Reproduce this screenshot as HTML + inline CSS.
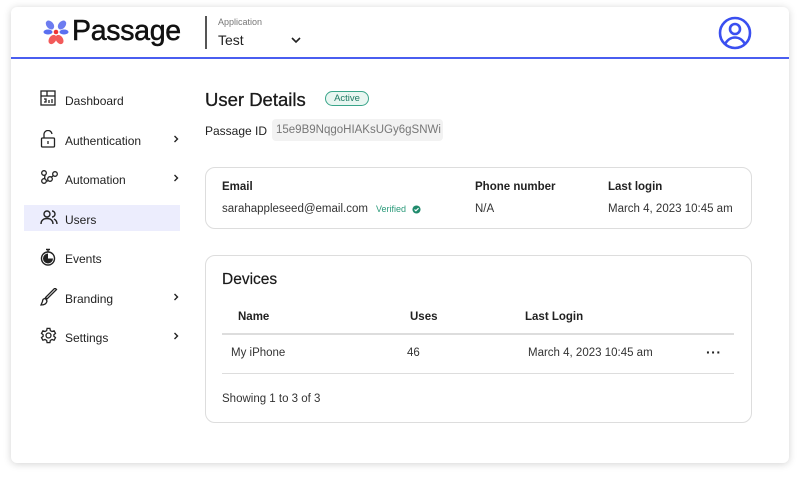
<!DOCTYPE html>
<html><head><meta charset="utf-8"><style>
*{box-sizing:border-box;margin:0;padding:0}
body{width:800px;height:478px;background:#fff;font-family:"Liberation Sans",sans-serif;color:#222;position:relative;overflow:hidden}
.card{position:absolute;left:11px;top:7px;width:778px;height:456px;background:#fff;border-radius:6px;box-shadow:0 1px 8px rgba(0,0,0,.18)}
.a{position:absolute;white-space:nowrap}
.nav{position:absolute;left:40px;font-size:12px;color:#222}
.nav svg{position:absolute;left:0;top:-3px}
.nav span{position:absolute;left:25px;top:1px}
.chev{position:absolute;left:172px;width:8px;height:8px}
.box{position:absolute;border:1.5px solid #ddd;border-radius:10px;background:#fff}
.b{font-weight:bold;font-size:11.5px}
.t{font-size:11.5px;color:#333}
</style></head><body>
<div class="card"></div>
<!-- logo -->
<svg class="a" style="left:43px;top:18px" width="26" height="28" viewBox="0 0 26 28">
<g fill="#6c7cf0"><ellipse cx="7" cy="7" rx="3.5" ry="5" transform="rotate(-40 7 7)"/><ellipse cx="19" cy="7" rx="3.5" ry="5" transform="rotate(40 19 7)"/><ellipse cx="5" cy="14" rx="4.5" ry="2.5" fill="#5a6ff0"/><ellipse cx="21" cy="14" rx="4.5" ry="2.5" fill="#5a6ff0"/></g>
<circle cx="13" cy="14" r="2.3" fill="#e33"/>
<ellipse cx="9.5" cy="21.5" rx="3.5" ry="5" transform="rotate(35 9.5 21.5)" fill="#f25a5a"/><ellipse cx="16.5" cy="21.5" rx="3.5" ry="5" transform="rotate(-35 16.5 21.5)" fill="#f25a5a"/>
</svg>
<div class="a" style="left:72px;top:15px;font-size:28.5px;color:#111;letter-spacing:-0.3px;-webkit-text-stroke:0.5px #111">Passage</div>
<div class="a" style="left:205px;top:16px;width:1.5px;height:33px;background:#555"></div>
<div class="a" style="left:218px;top:17px;font-size:9px;color:#777">Application</div>
<div class="a" style="left:218px;top:32px;font-size:14px;color:#222">Test</div>
<svg class="a" style="left:290px;top:36px" width="12" height="8" viewBox="0 0 12 8"><path d="M2 2l4 4 4-4" stroke="#222" stroke-width="1.6" fill="none"/></svg>
<svg class="a" style="left:718px;top:16px" width="34" height="34" viewBox="0 0 34 34"><g stroke="#3a4ff0" stroke-width="2.6" fill="none"><circle cx="17" cy="17" r="15"/><circle cx="17" cy="13" r="5"/><path d="M7 28c3-5 6-6.5 10-6.5s7 1.5 10 6.5"/></g></svg>
<div class="a" style="left:11px;top:57px;width:778px;height:1.5px;background:#4a5ef0"></div>
<!-- nav -->
<div class="a" style="left:24px;top:205px;width:156px;height:26px;background:#ecedfd"></div>
<div class="nav" style="top:93px"><svg width="16" height="16" viewBox="0 0 16 16"><g stroke="#222" stroke-width="1.3" fill="none"><rect x="1" y="1" width="14" height="14"/><path d="M1 6h14M7 1v5M4 9h2v3H4M9 10v3M12 9v4"/></g></svg><span>Dashboard</span></div>
<div class="nav" style="top:133px"><svg width="16" height="18" viewBox="0 0 16 18"><g stroke="#222" stroke-width="1.3" fill="none"><rect x="1.5" y="8" width="13" height="9" rx="1"/><path d="M4 8V5a4 4 0 0 1 8-1"/><path d="M8 11v3"/></g></svg><span>Authentication</span></div>
<svg class="chev" style="top:135px" viewBox="0 0 8 8"><path d="M2.5 1l3 3-3 3" stroke="#222" stroke-width="1.4" fill="none"/></svg>
<div class="nav" style="top:172px"><svg width="18" height="16" viewBox="0 0 18 16"><g stroke="#222" stroke-width="1.3" fill="none"><circle cx="4" cy="4" r="2.3"/><circle cx="4" cy="12" r="2.3"/><circle cx="10" cy="10" r="2.3"/><circle cx="15" cy="5" r="2.3"/><path d="M5 6l-.5 4M6 12h2M11.5 8l2-1.5"/></g></svg><span>Automation</span></div>
<svg class="chev" style="top:174px" viewBox="0 0 8 8"><path d="M2.5 1l3 3-3 3" stroke="#222" stroke-width="1.4" fill="none"/></svg>
<div class="nav" style="top:212px"><svg width="18" height="16" viewBox="0 0 18 16"><g stroke="#222" stroke-width="1.4" fill="none"><circle cx="7" cy="5" r="3"/><path d="M1 15c0-4 3-5.5 6-5.5s6 1.5 6 5.5M12 2a3 3 0 0 1 0 6M14 10c2 1 3 2.5 3 5"/></g></svg><span>Users</span></div>
<div class="nav" style="top:251px"><svg width="16" height="18" viewBox="0 0 16 18"><g stroke="#222" stroke-width="1.4" fill="none"><circle cx="8" cy="10.5" r="6.5"/><path d="M6 1.5h4M8 1.5v2.5"/></g><path d="M8 5.5a5 5 0 1 0 5 5H8z" fill="#222"/></svg><span>Events</span></div>
<div class="nav" style="top:291px"><svg width="18" height="18" viewBox="0 0 18 18"><g stroke="#222" stroke-width="1.3" fill="none"><path d="M16.5 1.5L7 11l-1.5-1.5L15 0z"/><path d="M5.5 10.5c-2 0-3 1-3 3L1 17c3 0 5.5-1 6-4z"/></g></svg><span>Branding</span></div>
<svg class="chev" style="top:293px" viewBox="0 0 8 8"><path d="M2.5 1l3 3-3 3" stroke="#222" stroke-width="1.4" fill="none"/></svg>
<div class="nav" style="top:330px"><svg width="17" height="17" viewBox="0 0 24 24"><g stroke="#222" stroke-width="1.8" fill="none"><circle cx="12" cy="12" r="3.5"/><path d="M10 2h4l.6 3 2.4 1.4 2.9-1 2 3.5-2.3 2v2.2l2.3 2-2 3.5-2.9-1L14.6 19l-.6 3h-4l-.6-3L7 17.6l-2.9 1-2-3.5 2.3-2v-2.2l-2.3-2 2-3.5 2.9 1L9.4 5z"/></g></svg><span>Settings</span></div>
<svg class="chev" style="top:332px" viewBox="0 0 8 8"><path d="M2.5 1l3 3-3 3" stroke="#222" stroke-width="1.4" fill="none"/></svg>
<!-- main -->
<div class="a" style="left:205px;top:89px;font-size:18.5px;color:#1a1a1a;-webkit-text-stroke:0.3px #1a1a1a">User Details</div>
<div class="a" style="left:325px;top:91px;width:44px;height:15px;border:1px solid #3aa58a;border-radius:8px;background:#e8f6f1;color:#1f7a63;font-size:9.5px;text-align:center;line-height:13px">Active</div>
<div class="a" style="left:205px;top:124px;font-size:12px">Passage ID</div>
<div class="a" style="left:272px;top:119px;width:171px;height:22px;background:#f2f2f2;border-radius:4px;font-size:11.5px;color:#777;padding:5px 0 0 4px">15e9B9NqgoHIAKsUGy6gSNWi</div>
<div class="box" style="left:205px;top:167px;width:547px;height:62px"></div>
<div class="a b" style="left:222px;top:181px">Email</div>
<div class="a b" style="left:475px;top:181px">Phone number</div>
<div class="a b" style="left:608px;top:181px">Last login</div>
<div class="a t" style="left:222px;top:203px">sarahappleseed@email.com</div>
<div class="a" style="left:376px;top:204px;font-size:9px;color:#2b9a7a">Verified</div>
<svg class="a" style="left:412px;top:205px" width="9" height="9" viewBox="0 0 10 10"><circle cx="5" cy="5" r="4.5" fill="#1f8a6c"/><path d="M2.8 5l1.5 1.5 3-3" stroke="#fff" stroke-width="1.3" fill="none"/></svg>
<div class="a t" style="left:475px;top:203px">N/A</div>
<div class="a t" style="left:608px;top:203px">March 4, 2023 10:45 am</div>
<div class="box" style="left:205px;top:255px;width:547px;height:168px"></div>
<div class="a" style="left:222px;top:271px;font-size:15.5px;color:#1a1a1a;-webkit-text-stroke:0.2px #1a1a1a">Devices</div>
<div class="a b" style="left:238px;top:311px">Name</div>
<div class="a b" style="left:410px;top:311px">Uses</div>
<div class="a b" style="left:525px;top:311px">Last Login</div>
<div class="a" style="left:222px;top:333px;width:512px;height:1.5px;background:#ddd"></div>
<div class="a t" style="left:231px;top:347px">My iPhone</div>
<div class="a t" style="left:407px;top:347px">46</div>
<div class="a t" style="left:528px;top:347px">March 4, 2023 10:45 am</div>
<div class="a" style="left:706px;top:344px;font-size:14px;font-weight:bold;letter-spacing:0.5px">···</div>
<div class="a" style="left:222px;top:373px;width:512px;height:1px;background:#ddd"></div>
<div class="a t" style="left:222px;top:393px">Showing 1 to 3 of 3</div>
</body></html>
